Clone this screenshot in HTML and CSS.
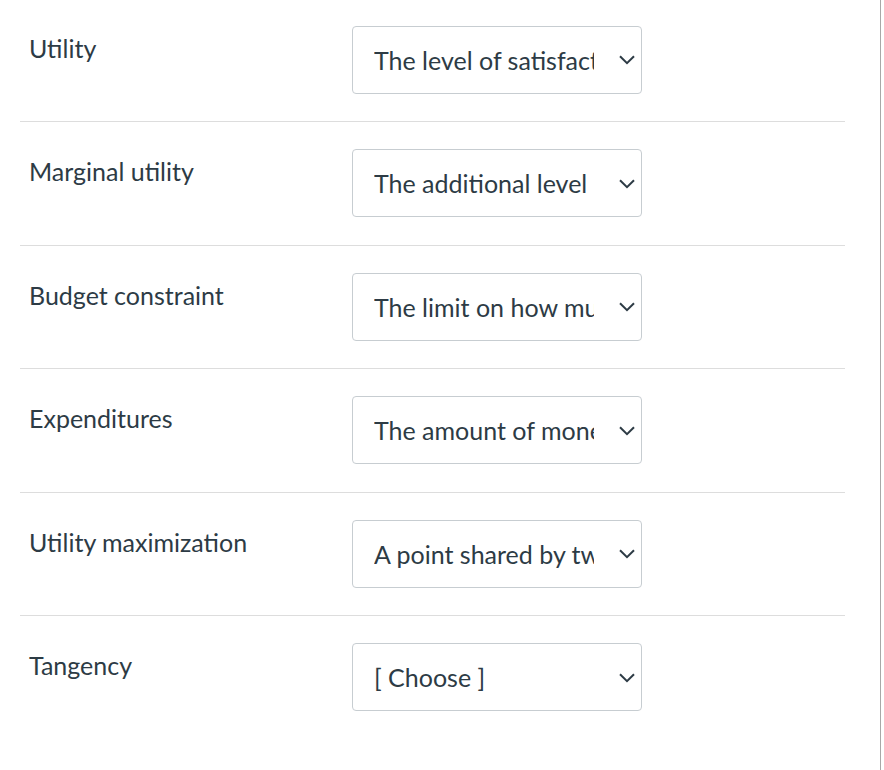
FILE: index.html
```html
<!DOCTYPE html>
<html lang="en">
<head>
<meta charset="utf-8">
<title>Matching question</title>
<link rel="stylesheet" href="styles.css">
</head>
<body>
<div class="page">
  <div class="answers">
    <div class="row first">
      <div class="label">Utility</div>
      <div class="select">
        <span class="value">The level of satisfaction a consumer receives</span>
        <svg class="chev" width="16" height="10" viewBox="0 0 16 10"><path d="M1 1.2 L8 8.2 L15 1.2" fill="none" stroke="#2d3b45" stroke-width="2"/></svg>
      </div>
    </div>
    <div class="row">
      <div class="label">Marginal utility</div>
      <div class="select">
        <span class="value">The additional level of satisfaction</span>
        <svg class="chev" width="16" height="10" viewBox="0 0 16 10"><path d="M1 1.2 L8 8.2 L15 1.2" fill="none" stroke="#2d3b45" stroke-width="2"/></svg>
      </div>
    </div>
    <div class="row">
      <div class="label">Budget constraint</div>
      <div class="select">
        <span class="value">The limit on how much a consumer can spend</span>
        <svg class="chev" width="16" height="10" viewBox="0 0 16 10"><path d="M1 1.2 L8 8.2 L15 1.2" fill="none" stroke="#2d3b45" stroke-width="2"/></svg>
      </div>
    </div>
    <div class="row">
      <div class="label">Expenditures</div>
      <div class="select">
        <span class="value">The amount of money spent</span>
        <svg class="chev" width="16" height="10" viewBox="0 0 16 10"><path d="M1 1.2 L8 8.2 L15 1.2" fill="none" stroke="#2d3b45" stroke-width="2"/></svg>
      </div>
    </div>
    <div class="row">
      <div class="label">Utility maximization</div>
      <div class="select">
        <span class="value">A point shared by two curves</span>
        <svg class="chev" width="16" height="10" viewBox="0 0 16 10"><path d="M1 1.2 L8 8.2 L15 1.2" fill="none" stroke="#2d3b45" stroke-width="2"/></svg>
      </div>
    </div>
    <div class="row last">
      <div class="label">Tangency</div>
      <div class="select">
        <span class="value">[ Choose ]</span>
        <svg class="chev" width="16" height="10" viewBox="0 0 16 10"><path d="M1 1.2 L8 8.2 L15 1.2" fill="none" stroke="#2d3b45" stroke-width="2"/></svg>
      </div>
    </div>
  </div>
</div>
</body>
</html>
```
FILE: styles.css
```css
html, body {
  margin: 0;
  padding: 0;
  background: #ffffff;
}
body {
  font-family: Lato, "Noto Sans", sans-serif;
  color: #2d3b45;
}
.page {
  width: 881px;
  min-height: 770px;
  border-right: 1px solid #a8a8a8;
  padding-left: 20px;
  box-sizing: border-box;
}
.answers {
  width: 825px;
}
.row {
  display: grid;
  grid-template-columns: 323px 290px;
  align-items: start;
  padding: 27px 0 27.5px 9px;
  border-bottom: 1px solid #dddddd;
}
.row.first {
  padding-top: 25.5px;
}
.row.last {
  border-bottom: none;
}
.label {
  font-size: 25px;
  line-height: 30px;
  margin-top: 7px;
}
.select {
  display: flex;
  align-items: center;
  height: 68px;
  box-sizing: border-box;
  border: 1px solid #c7cdd1;
  border-radius: 4px;
  padding: 0 6px 0 21px;
  font-size: 25px;
}
.value {
  flex: 1;
  min-width: 0;
  overflow: hidden;
  white-space: nowrap;
}
.chev {
  flex: none;
  margin-left: 25px;
  margin-top: 1px;
}
```
